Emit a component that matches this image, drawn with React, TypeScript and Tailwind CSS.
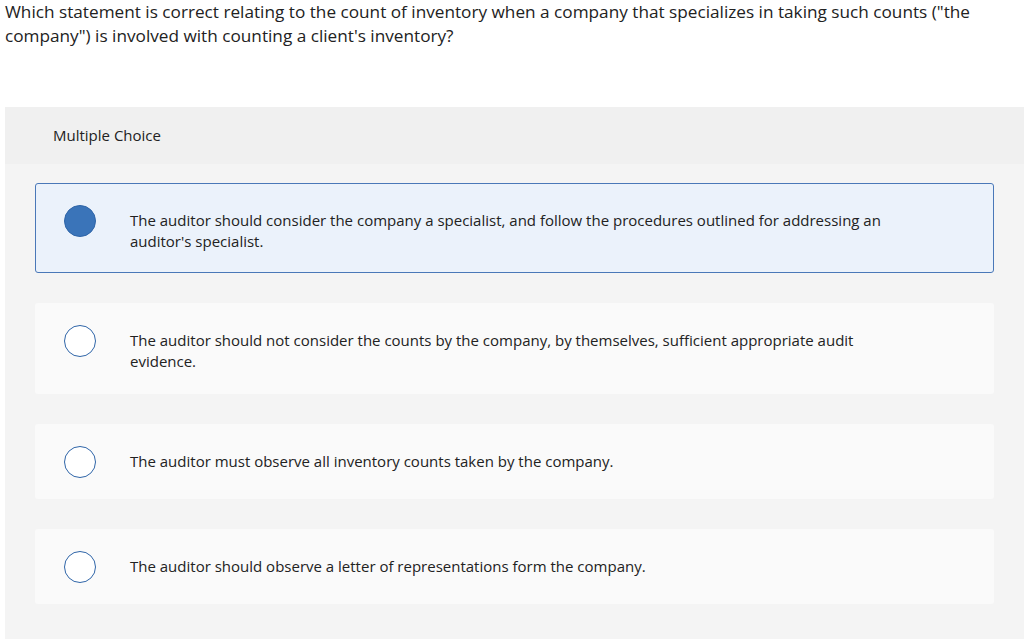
const OPTIONS = [
  {
    id: 1,
    text: "The auditor should consider the company a specialist, and follow the procedures outlined for addressing an auditor's specialist.",
    selected: true,
    height: 'h-[90px]',
  },
  {
    id: 2,
    text: 'The auditor should not consider the counts by the company, by themselves, sufficient appropriate audit evidence.',
    selected: false,
    height: 'h-[91px]',
  },
  {
    id: 3,
    text: 'The auditor must observe all inventory counts taken by the company.',
    selected: false,
    height: 'h-[75px]',
  },
  {
    id: 4,
    text: 'The auditor should observe a letter of representations form the company.',
    selected: false,
    height: 'h-[75px]',
  },
];

export default function App() {
  return (
    <div className="min-h-screen bg-white font-['Open_Sans',sans-serif] text-[#222]">
      <p className="px-[5px] text-[17.2px] leading-[24px] w-[1000px]">
        Which statement is correct relating to the count of inventory when a company that specializes in taking such counts ("the
        company") is involved with counting a client's inventory?
      </p>

      <div className="mt-[59px] ml-[5px] bg-[#f4f4f4] pb-[40px]">
        <div className="h-[57px] bg-[#f0f0f0] flex items-center px-[48px] text-[15px]">
          Multiple Choice
        </div>

        <div className="flex flex-col gap-[30px] pt-[19px] pl-[30px] pr-[30px]">
          {OPTIONS.map((o) => (
            <div
              key={o.id}
              className={`${o.height} flex items-start rounded-[3px] pl-[28px] pt-[21px] ${
                o.selected ? 'bg-[#ebf2fb] border border-[#4a78b8]' : 'bg-[#fafafa] border border-transparent'
              }`}
            >
              <span
                className={`shrink-0 w-[32px] h-[32px] rounded-full border-[1.5px] border-[#2f65a8] ${
                  o.selected ? 'bg-[#3a74b9]' : 'bg-white'
                }`}
              />
              <p className="ml-[34px] mt-[5px] w-[770px] text-[15px] leading-[21px] text-[#222]">{o.text}</p>
            </div>
          ))}
        </div>
      </div>
    </div>
  );
}
